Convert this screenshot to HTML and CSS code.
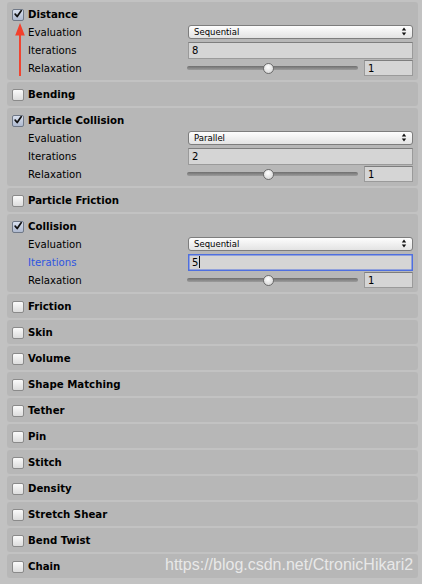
FILE: index.html
```html
<!DOCTYPE html>
<html>
<head>
<meta charset="utf-8">
<link rel="stylesheet" href="styles.css">
</head>
<body>
<div class="panel">
  <div class="section">
    <div class="head"><span class="cb checked"><svg viewBox="0 0 12 12"><path d="M2.6 6.2 L5 9 L9.8 2.2" fill="none" stroke="#111" stroke-width="2.1" stroke-linecap="round" stroke-linejoin="round"/></svg></span><span class="title">Distance</span></div>
    <div class="row"><span class="label">Evaluation</span><div class="dropdown"><span>Sequential</span><svg class="arrows" viewBox="0 0 6 9"><path d="M3 0.5 L5.2 3.4 L0.8 3.4Z M3 8.5 L5.2 5.6 L0.8 5.6Z" fill="#111"/></svg></div></div>
    <div class="row"><span class="label">Iterations</span><div class="field">8</div></div>
    <div class="row"><span class="label">Relaxation</span><div class="slider"><div class="track"></div><div class="thumb"></div></div><div class="num">1</div></div>
  </div>
  <div class="section"><div class="head"><span class="cb"></span><span class="title">Bending</span></div></div>
  <div class="section">
    <div class="head"><span class="cb checked"><svg viewBox="0 0 12 12"><path d="M2.6 6.2 L5 9 L9.8 2.2" fill="none" stroke="#111" stroke-width="2.1" stroke-linecap="round" stroke-linejoin="round"/></svg></span><span class="title">Particle Collision</span></div>
    <div class="row"><span class="label">Evaluation</span><div class="dropdown"><span>Parallel</span><svg class="arrows" viewBox="0 0 6 9"><path d="M3 0.5 L5.2 3.4 L0.8 3.4Z M3 8.5 L5.2 5.6 L0.8 5.6Z" fill="#111"/></svg></div></div>
    <div class="row"><span class="label">Iterations</span><div class="field">2</div></div>
    <div class="row"><span class="label">Relaxation</span><div class="slider"><div class="track"></div><div class="thumb"></div></div><div class="num">1</div></div>
  </div>
  <div class="section"><div class="head"><span class="cb"></span><span class="title">Particle Friction</span></div></div>
  <div class="section">
    <div class="head"><span class="cb checked"><svg viewBox="0 0 12 12"><path d="M2.6 6.2 L5 9 L9.8 2.2" fill="none" stroke="#111" stroke-width="2.1" stroke-linecap="round" stroke-linejoin="round"/></svg></span><span class="title">Collision</span></div>
    <div class="row"><span class="label">Evaluation</span><div class="dropdown"><span>Sequential</span><svg class="arrows" viewBox="0 0 6 9"><path d="M3 0.5 L5.2 3.4 L0.8 3.4Z M3 8.5 L5.2 5.6 L0.8 5.6Z" fill="#111"/></svg></div></div>
    <div class="row"><span class="label active">Iterations</span><div class="field focused">5<span class="caret"></span></div></div>
    <div class="row"><span class="label">Relaxation</span><div class="slider"><div class="track"></div><div class="thumb"></div></div><div class="num">1</div></div>
  </div>
  <div class="section"><div class="head"><span class="cb"></span><span class="title">Friction</span></div></div>
  <div class="section"><div class="head"><span class="cb"></span><span class="title">Skin</span></div></div>
  <div class="section"><div class="head"><span class="cb"></span><span class="title">Volume</span></div></div>
  <div class="section"><div class="head"><span class="cb"></span><span class="title">Shape Matching</span></div></div>
  <div class="section"><div class="head"><span class="cb"></span><span class="title">Tether</span></div></div>
  <div class="section"><div class="head"><span class="cb"></span><span class="title">Pin</span></div></div>
  <div class="section"><div class="head"><span class="cb"></span><span class="title">Stitch</span></div></div>
  <div class="section"><div class="head"><span class="cb"></span><span class="title">Density</span></div></div>
  <div class="section"><div class="head"><span class="cb"></span><span class="title">Stretch Shear</span></div></div>
  <div class="section"><div class="head"><span class="cb"></span><span class="title">Bend Twist</span></div></div>
  <div class="section"><div class="head"><span class="cb"></span><span class="title">Chain</span></div></div>
</div>
<svg class="red-arrow" viewBox="0 0 12 56"><path d="M6 0 L11 13 L7 13 L7 55 L5 55 L5 13 L1 13 Z" fill="#f2402c"/></svg>
<div class="watermark">https://blog.csdn.net/CtronicHikari2</div>
</body>
</html>
```
FILE: styles.css
```css
html, body {
  margin: 0;
  padding: 0;
}
body {
  background: #c2c2c2;
  width: 422px;
  height: 584px;
  overflow: hidden;
  position: relative;
  font-family: "DejaVu Sans", Verdana, sans-serif;
  font-size: 10px;
  color: #000;
}
.panel {
  padding: 2px 4px 0 7px;
  display: flex;
  flex-direction: column;
  gap: 2px;
}
.section {
  background: #b7b7b7;
  border-radius: 3px;
  padding: 3px 5px 3px 5px;
}
.head {
  height: 18px;
  display: flex;
  align-items: center;
  gap: 4px;
}
.cb {
  width: 10px;
  height: 10px;
  border: 1px solid #8a8a8a;
  border-radius: 2px;
  background: linear-gradient(#fbfbfb, #dcdcdc);
  display: flex;
  align-items: center;
  justify-content: center;
  flex: none;
  margin-top: 1px;
}
.cb.checked {
  background: linear-gradient(#d9e0ee, #aeb9cf);
  border-color: #6f7887;
}
.cb svg {
  width: 12px;
  height: 12px;
  margin-top: -1px;
}
.title {
  font-weight: bold;
  font-size: 10.2px;
}
.row {
  height: 18px;
  display: flex;
  align-items: center;
  padding-left: 16px;
}
.label {
  width: 160px;
  flex: none;
  font-size: 10.2px;
}
.label.active {
  color: #2e55e0;
}
.dropdown {
  flex: 1;
  height: 12px;
  border: 1px solid #7d7d7d;
  border-radius: 3px;
  background: linear-gradient(#fdfdfd, #e3e3e3);
  display: flex;
  align-items: center;
  justify-content: space-between;
  padding: 0 5px;
  font-size: 8.5px;
  margin-top: -1px;
}
.arrows {
  width: 6px;
  height: 9px;
}
.field {
  flex: 1;
  height: 15px;
  border: 1px solid #9a9a9a;
  border-top-color: #7e7e7e;
  background: #d5d5d5;
  display: flex;
  align-items: center;
  padding-left: 3px;
  font-size: 10px;
}
.field.focused {
  border: 1px solid #4e6fe0;
  box-shadow: inset 0 0 0 0.5px #4e6fe0;
}
.caret {
  width: 1px;
  height: 12px;
  background: #111;
  margin-left: 1px;
}
.slider {
  position: relative;
  width: 171px;
  height: 14px;
  flex: none;
  margin-left: -1px;
  margin-right: 6px;
  display: flex;
  align-items: center;
}
.track {
  width: 100%;
  height: 4px;
  border-radius: 2px;
  background: linear-gradient(#6f6f6f, #9c9c9c);
}
.thumb {
  position: absolute;
  left: 76px;
  top: 2px;
  width: 9px;
  height: 9px;
  border-radius: 50%;
  border: 1px solid #6c6c6c;
  background: radial-gradient(circle at 45% 35%, #ffffff, #dcdcdc 70%, #c4c4c4);
}
.num {
  flex: 1;
  height: 14px;
  border: 1px solid #9a9a9a;
  border-top-color: #7e7e7e;
  background: #d5d5d5;
  display: flex;
  align-items: center;
  padding-left: 3px;
  font-size: 10px;
}
.red-arrow {
  position: absolute;
  left: 14px;
  top: 23px;
  width: 12px;
  height: 54px;
}
.watermark {
  position: absolute;
  left: 165px;
  top: 556px;
  font-family: "Liberation Sans", Arial, sans-serif;
  font-size: 16px;
  color: rgba(255, 255, 255, 0.7);
  white-space: nowrap;
}
```
